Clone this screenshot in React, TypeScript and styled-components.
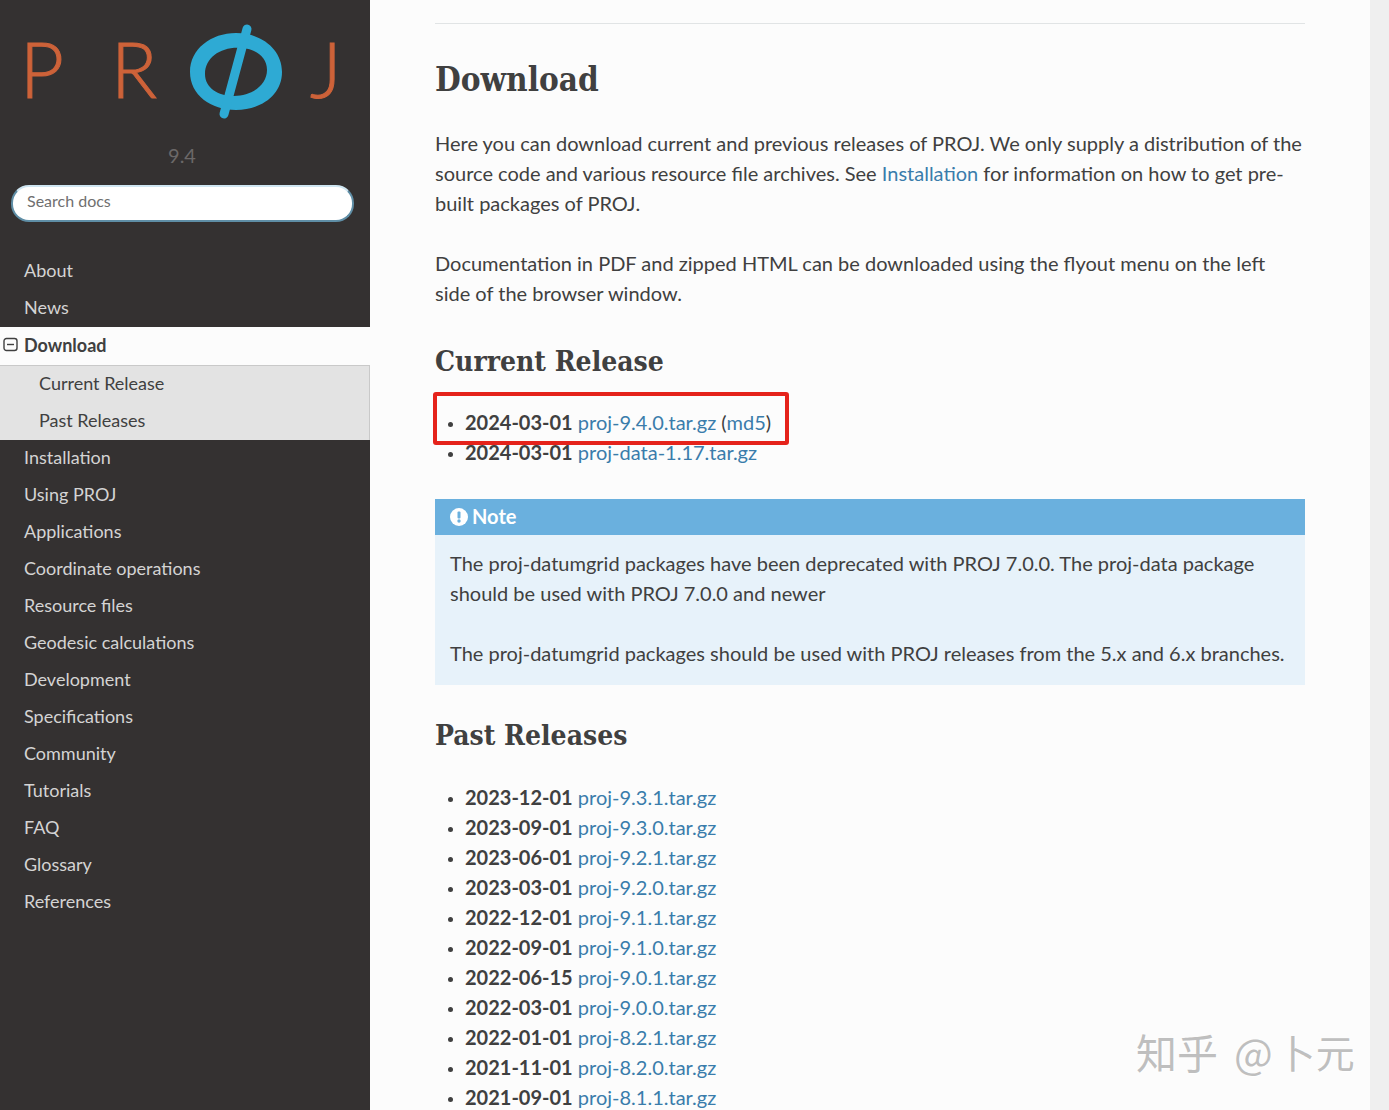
import styled, { createGlobalStyle } from 'styled-components';

const GlobalStyle = createGlobalStyle`
    html, body {
        margin: 0;
        padding: 0;
        height: 1110px;
        overflow: hidden;
        background: #efefef;
        font-family: 'Lato', 'Noto Sans', sans-serif;
        color: #404040;
    }
`;

const Page = styled.div`
    display: flex;
    height: 1110px;
    overflow: hidden;
    position: relative;
`;

const Sidebar = styled.nav`
    width: 370px;
    flex-shrink: 0;
    background: #343131;
    display: flex;
    flex-direction: column;
`;

const Logo = styled.div`
    height: 132px;
    display: flex;
    align-items: center;
    padding-left: 20px;
    padding-top: 10px;
    box-sizing: border-box;
`;

const LogoLetter = styled.span<{ $width: number }>`
    width: ${({ $width }) => $width}px;
    padding-bottom: 4px;
    font-family: 'Lato', sans-serif;
    font-weight: 300;
    font-size: 76px;
    line-height: 1;
    color: #cd6239;
    -webkit-text-stroke: 1px #cd6239;
`;

const Version = styled.div`
    height: 30px;
    margin-top: 8px;
    text-align: center;
    font-size: 20px;
    line-height: 30px;
    color: #6b6868;
    padding-right: 6px;
`;

const Search = styled.div`
    box-sizing: border-box;
    width: 343px;
    height: 37px;
    margin: 15px 0 0 11px;
    padding-left: 14px;
    background: #fff;
    border: 2px solid #5f8ea6;
    border-top-color: #cfe6f2;
    border-radius: 18px;
    font-size: 16px;
    line-height: 27px;
    color: #6f6f6f;
`;

const Menu = styled.ul`
    list-style: none;
    margin: 30px 0 0;
    padding: 0;
`;

const ActiveItem = styled.li`
    box-sizing: border-box;
    height: 39px;
    margin-top: 1px;
    display: flex;
    align-items: center;
    gap: 6px;
    padding: 0 0 3px 3px;
    background: #fcfcfc;
    border-bottom: 1px solid #c9c9c9;
    font-size: 18px;
    font-weight: 700;
    color: #404040;
`;

const SubItem = styled.li`
    height: 37px;
    padding-left: 39px;
    font-size: 18px;
    line-height: 35px;
    color: #404040;
    background: #e3e3e3;
    border-right: 1px solid #c9c9c9;
`;

const MenuItem = styled.li`
    height: 37px;
    padding-left: 24px;
    font-size: 18px;
    line-height: 37px;
    color: #d4d4d4;

    ${SubItem} + & {
        margin-top: -1px;
    }
`;

const Main = styled.main`
    width: 1000px;
    flex-shrink: 0;
    box-sizing: border-box;
    background: #fcfcfc;
    padding: 23px 65px 0;
    font-size: 20px;
    line-height: 30px;
`;

const Rule = styled.hr`
    margin: 0;
    border: 0;
    border-top: 1px solid #e1e4e5;
`;

const Title = styled.h1`
    margin: 32px 0 0;
    font-family: 'DejaVu Serif Condensed', 'DejaVu Serif', serif;
    font-stretch: condensed;
    font-size: 33px;
    font-weight: 700;
    line-height: 48px;
    color: #404040;
`;

const Section = styled.h2<{ $top: number }>`
    margin: ${({ $top }) => $top}px 0 0;
    font-family: 'DejaVu Serif Condensed', 'DejaVu Serif', serif;
    font-stretch: condensed;
    font-size: 28px;
    font-weight: 700;
    line-height: 40px;
    color: #404040;
`;

const Paragraph = styled.p<{ $top: number }>`
    margin: ${({ $top }) => $top}px 0 0;
`;

const Link = styled.a`
    color: #3a7cab;
`;

const Releases = styled.ul<{ $top: number }>`
    margin: ${({ $top }) => $top}px 0 0;
    padding: 0 0 0 30px;
    list-style: disc;

    li::marker {
        font-size: 15px;
    }
`;

const Date = styled.strong`
    font-weight: 700;
`;

const Note = styled.div`
    margin-top: 32px;
    background: #e7f2fa;
    padding-bottom: 17px;
`;

const NoteTitle = styled.div`
    box-sizing: border-box;
    height: 36px;
    display: flex;
    align-items: center;
    gap: 4px;
    padding: 0 0 2px 15px;
    background: #6ab0de;
    color: #fff;
    font-weight: 700;
    line-height: 34px;

    svg {
        margin-top: 2px;
    }
`;

const NoteText = styled.p<{ $top: number }>`
    margin: ${({ $top }) => $top}px 15px 0;
`;

const Watermark = styled.div`
    position: absolute;
    left: 1136px;
    top: 1026px;
    display: flex;
    gap: 16px;
    font-family: 'Noto Sans CJK SC', sans-serif;
    font-size: 41px;
    line-height: 50px;
    white-space: nowrap;
    color: rgba(170, 170, 170, 0.75);
    text-shadow: 1px 1px 0 rgba(255, 255, 255, 0.9);
`;

const WatermarkName = styled.span`
    margin-left: -12px;
    font-size: 39px;
`;

const Highlight = styled.div`
    position: absolute;
    left: 433px;
    top: 392px;
    width: 356px;
    height: 53px;
    box-sizing: border-box;
    border: 4px solid #e5231b;
    border-radius: 3px;
`;

const navBefore = ['About', 'News'];
const navAfter = [
    'Installation',
    'Using PROJ',
    'Applications',
    'Coordinate operations',
    'Resource files',
    'Geodesic calculations',
    'Development',
    'Specifications',
    'Community',
    'Tutorials',
    'FAQ',
    'Glossary',
    'References',
];

const past = [
    ['2023-12-01', 'proj-9.3.1.tar.gz'],
    ['2023-09-01', 'proj-9.3.0.tar.gz'],
    ['2023-06-01', 'proj-9.2.1.tar.gz'],
    ['2023-03-01', 'proj-9.2.0.tar.gz'],
    ['2022-12-01', 'proj-9.1.1.tar.gz'],
    ['2022-09-01', 'proj-9.1.0.tar.gz'],
    ['2022-06-15', 'proj-9.0.1.tar.gz'],
    ['2022-03-01', 'proj-9.0.0.tar.gz'],
    ['2022-01-01', 'proj-8.2.1.tar.gz'],
    ['2021-11-01', 'proj-8.2.0.tar.gz'],
    ['2021-09-01', 'proj-8.1.1.tar.gz'],
];

const LogoMark = () => (
    <svg width="96" height="98" viewBox="0 0 96 98" style={{ marginRight: 26 }}>
        <path
            fillRule="evenodd"
            fill="#2eaad4"
            d="M48 11C73 11 94 27 94 50C94 73 73 88 48 88C23 88 2 73 2 50C2 27 23 11 48 11ZM54 26C34 24 17 35 17 52C17 66 30 74 46 74C64 74 79 63 79 48C79 35 68 27 54 26Z"
        />
        <line x1="59" y1="7" x2="36" y2="92" stroke="#2eaad4" strokeWidth="9" strokeLinecap="round" />
    </svg>
);

const CollapseIcon = () => (
    <svg width="15" height="15" viewBox="0 0 15 15">
        <rect x="1" y="1.5" width="13" height="12" rx="2.5" fill="none" stroke="#404040" strokeWidth="1.4" />
        <line x1="4" y1="7.5" x2="11" y2="7.5" stroke="#404040" strokeWidth="1.4" />
    </svg>
);

const NoteIcon = () => (
    <svg width="18" height="18" viewBox="0 0 18 18">
        <circle cx="9" cy="9" r="9" fill="#fff" />
        <rect x="7.5" y="3.5" width="3" height="7" rx="1" fill="#6ab0de" />
        <circle cx="9" cy="13" r="1.7" fill="#6ab0de" />
    </svg>
);

export default function App() {
    return (
        <Page>
            <GlobalStyle />
            <Sidebar>
                <Logo>
                    <LogoLetter $width={91}>P</LogoLetter>
                    <LogoLetter $width={77}>R</LogoLetter>
                    <LogoMark />
                    <LogoLetter $width={40}>J</LogoLetter>
                </Logo>
                <Version>9.4</Version>
                <Search>Search docs</Search>
                <Menu>
                    {navBefore.map((item) => (
                        <MenuItem key={item}>{item}</MenuItem>
                    ))}
                    <ActiveItem>
                        <CollapseIcon />
                        Download
                    </ActiveItem>
                    <SubItem>Current Release</SubItem>
                    <SubItem>Past Releases</SubItem>
                    {navAfter.map((item) => (
                        <MenuItem key={item}>{item}</MenuItem>
                    ))}
                </Menu>
            </Sidebar>
            <Main>
                <Rule />
                <Title>Download</Title>
                <Paragraph $top={24}>
                    Here you can download current and previous releases of PROJ. We only supply a distribution of the
                    source code and various resource file archives. See <Link>Installation</Link> for information on how
                    to get pre-built packages of PROJ.
                </Paragraph>
                <Paragraph $top={30}>
                    Documentation in PDF and zipped HTML can be downloaded using the flyout menu on the left side of the
                    browser window.
                </Paragraph>
                <Section $top={34}>Current Release</Section>
                <Releases $top={25}>
                    <li>
                        <Date>2024-03-01</Date> <Link>proj-9.4.0.tar.gz</Link> (<Link>md5</Link>)
                    </li>
                    <li>
                        <Date>2024-03-01</Date> <Link>proj-data-1.17.tar.gz</Link>
                    </li>
                </Releases>
                <Note>
                    <NoteTitle>
                        <NoteIcon />
                        Note
                    </NoteTitle>
                    <NoteText $top={13}>
                        The proj-datumgrid packages have been deprecated with PROJ 7.0.0. The proj-data package should be
                        used with PROJ 7.0.0 and newer
                    </NoteText>
                    <NoteText $top={30}>
                        The proj-datumgrid packages should be used with PROJ releases from the 5.x and 6.x branches.
                    </NoteText>
                </Note>
                <Section $top={31}>Past Releases</Section>
                <Releases $top={26}>
                    {past.map(([date, file]) => (
                        <li key={file}>
                            <Date>{date}</Date> <Link>{file}</Link>
                        </li>
                    ))}
                </Releases>
            </Main>
            <Highlight />
            <Watermark>
                <span>知乎</span>
                <span>@</span>
                <WatermarkName>卜元</WatermarkName>
            </Watermark>
        </Page>
    );
}
